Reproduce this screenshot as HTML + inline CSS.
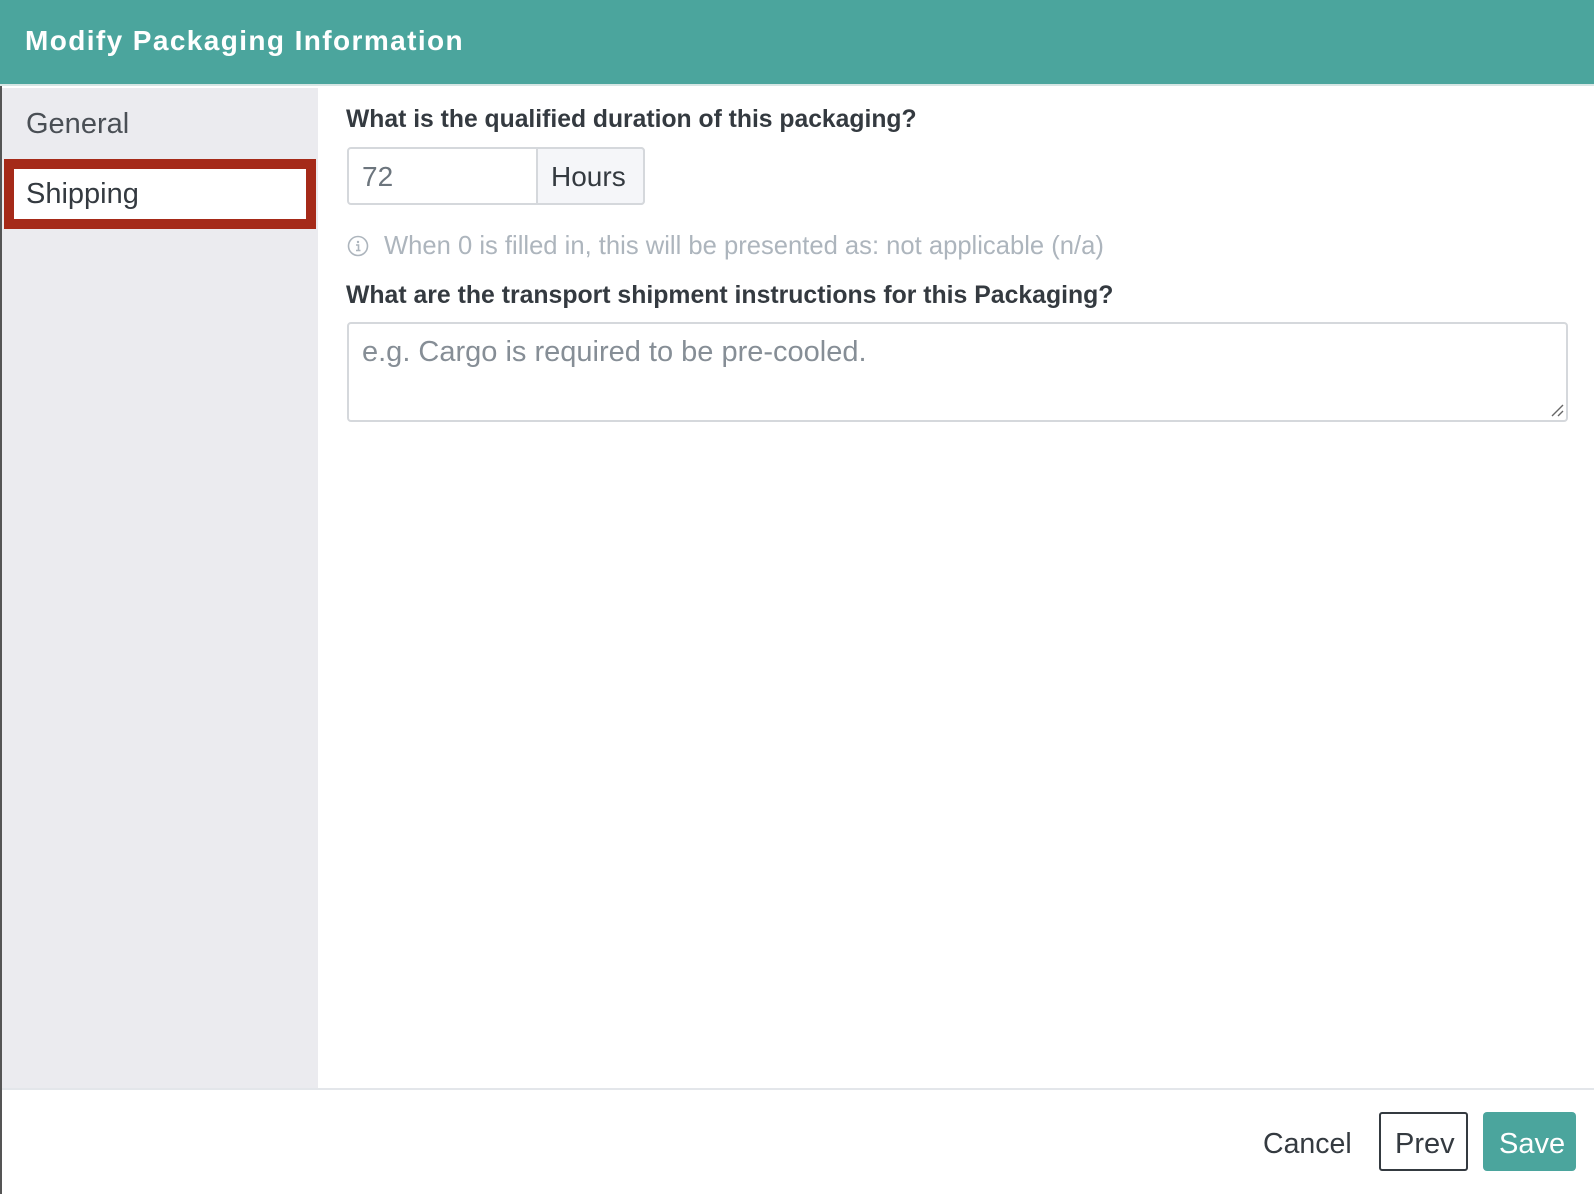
<!DOCTYPE html>
<html><head><style>
*{box-sizing:border-box;margin:0;padding:0}
body{width:1594px;height:1194px;background:#fff;font-family:"Liberation Sans",sans-serif;position:relative;overflow:hidden;color:#343a40}
.a{position:absolute}
.hdr{left:0;top:0;width:1594px;height:86px;background:#4ba59d;border-bottom:2px solid #d6e6e4}
.title{left:25px;top:25px;font-size:28px;font-weight:bold;color:#fff;letter-spacing:1.4px}
.side{left:2px;top:88px;width:316px;height:1001px;background:#ebebef}
.t{white-space:nowrap}
</style></head><body>
<div class="a" style="left:0;top:0;width:2px;height:1194px;background:#555"></div>
<div class="a hdr"></div>
<div class="a title t">Modify Packaging Information</div>
<div class="a side"></div>
<div class="a t" style="left:26px;top:108px;font-size:29px;color:#4a4f55">General</div>
<div class="a" style="left:4px;top:159px;width:312px;height:70px;border:10px solid #a52a19;background:#fff"></div>
<div class="a t" style="left:26px;top:178px;font-size:29px;color:#343a40">Shipping</div>

<div class="a t" style="left:346px;top:106px;font-size:24.7px;font-weight:bold;color:#343a40">What is the qualified duration of this packaging?</div>
<div class="a" style="left:347px;top:147px;width:298px;height:58px;border:2px solid #d5d8dc;border-radius:4px;background:#fff"></div>
<div class="a" style="left:536px;top:147px;width:109px;height:58px;border:2px solid #d5d8dc;border-radius:0 4px 4px 0;background:#f5f6f9"></div>
<div class="a t" style="left:362px;top:161px;font-size:28px;color:#6c757d">72</div>
<div class="a t" style="left:551px;top:161px;font-size:28px;color:#343a40">Hours</div>

<svg class="a" style="left:347px;top:235px" width="22" height="22" viewBox="0 0 22 22"><circle cx="11" cy="11" r="9.5" fill="none" stroke="#adb5bd" stroke-width="1.6"/><circle cx="11" cy="7" r="1.2" fill="#adb5bd"/><path d="M9 10h2.5v5.5M9 15.5h4.5" stroke="#adb5bd" stroke-width="1.6" fill="none"/></svg>
<div class="a t" style="left:384px;top:232px;font-size:25.6px;color:#adb5bd">When 0 is filled in, this will be presented as: not applicable (n/a)</div>

<div class="a t" style="left:346px;top:282px;font-size:24.8px;font-weight:bold;color:#343a40">What are the transport shipment instructions for this Packaging?</div>
<div class="a" style="left:347px;top:322px;width:1221px;height:100px;border:2px solid #d5d8dc;border-radius:4px"></div>
<div class="a t" style="left:362px;top:336px;font-size:29px;color:#868e96">e.g. Cargo is required to be pre-cooled.</div>
<svg class="a" style="left:1550px;top:403px" width="14" height="14"><path d="M2 13L13 2M8 13L13 8" stroke="#666" stroke-width="1.4"/></svg>

<div class="a" style="left:2px;top:1088px;width:1592px;height:2px;background:#e3e6ea"></div>
<div class="a t" style="left:1263px;top:1128px;font-size:28.5px;color:#343a40">Cancel</div>
<div class="a" style="left:1379px;top:1112px;width:89px;height:59px;border:2px solid #343a40;border-radius:3px;background:#fff"></div>
<div class="a t" style="left:1395px;top:1128px;font-size:29px;color:#343a40">Prev</div>
<div class="a" style="left:1483px;top:1112px;width:93px;height:59px;border-radius:4px;background:#4ba59d"></div>
<div class="a t" style="left:1499px;top:1128px;font-size:29px;color:#fff">Save</div>
</body></html>
